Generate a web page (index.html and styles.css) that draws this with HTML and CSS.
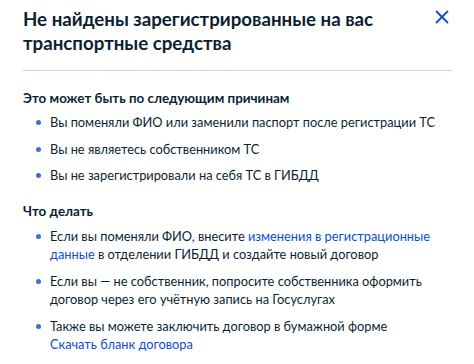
FILE: index.html
```html
<!DOCTYPE html>
<html lang="ru">
<head>
<meta charset="utf-8">
<link rel="stylesheet" href="styles.css">
</head>
<body>
<div class="modal">
  <div class="head">
    <h1 class="title">Не найдены зарегистрированные на вас транспортные средства</h1>
    <button class="close" aria-label="Закрыть">
      <svg width="14" height="14" viewBox="0 0 14 14"><path d="M1.5 1.5 L12.5 12.5 M12.5 1.5 L1.5 12.5" stroke="#0d4cd3" stroke-width="1.8" fill="none" stroke-linecap="round"/></svg>
    </button>
  </div>
  <div class="divider"></div>
  <h2 class="sub">Это может быть по следующим причинам</h2>
  <ul class="list list1">
    <li>Вы поменяли ФИО или заменили паспорт после регистрации ТС</li>
    <li>Вы не являетесь собственником ТС</li>
    <li>Вы не зарегистрировали на себя ТС в ГИБДД</li>
  </ul>
  <h2 class="sub sub2">Что делать</h2>
  <ul class="list list2">
    <li>Если вы поменяли ФИО, внесите <a class="link" href="#">изменения в регистрационные<br>данные</a> в отделении ГИБДД и создайте новый договор</li>
    <li>Если вы — не собственник, попросите собственника оформить<br>договор через его учётную запись на Госуслугах</li>
    <li>Также вы можете заключить договор в бумажной форме<br><a class="link" href="#">Скачать бланк договора</a></li>
  </ul>
</div>
</body>
</html>
```

FILE: styles.css
```css
html, body {
  margin: 0;
  padding: 0;
  background: #ffffff;
}
body {
  font-family: Lato, "Noto Sans", sans-serif;
  color: #0b1f33;
}
.modal {
  padding: 7px 22px 0 23px;
}
.head {
  display: flex;
  justify-content: space-between;
  align-items: flex-start;
}
.title {
  margin: 0;
  font-size: 18.7px;
  line-height: 24px;
  font-weight: 700;
  max-width: 380px;
}
.close {
  border: 0;
  background: none;
  padding: 0;
  margin: 3px 3px 0 0;
  width: 14px;
  height: 14px;
  display: flex;
}
.divider {
  height: 1px;
  background: #c9d4e6;
  margin-top: 15px;
}
.sub {
  margin: 17px 0 0;
  font-size: 13.4px;
  line-height: 20px;
  font-weight: 700;
}
.sub2 {
  margin-top: 17px;
}
.list {
  list-style: none;
  margin: 5px 0 0;
  padding: 0 0 0 27px;
  display: flex;
  flex-direction: column;
  gap: 9px;
}
.list1 {
  gap: 8.5px;
}
.list2 {
  margin-top: 6px;
}
.list li {
  position: relative;
  font-size: 12.8px;
  line-height: 18px;
  white-space: nowrap;
}
.list li::before {
  content: "";
  position: absolute;
  left: -14px;
  top: 7px;
  width: 5px;
  height: 5px;
  border-radius: 50%;
  background: #3d6fd9;
}
.link {
  color: #0d4cd3;
  text-decoration: none;
}
```
